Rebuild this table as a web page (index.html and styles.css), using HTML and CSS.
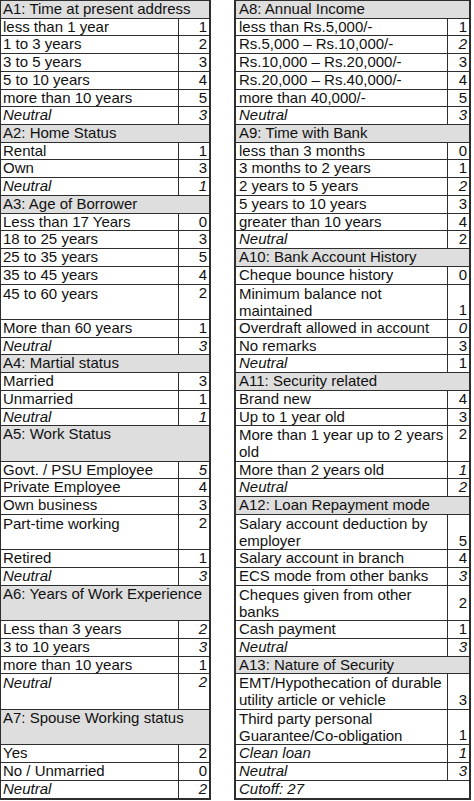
FILE: index.html
```html
<!DOCTYPE html>
<html>
<head>
<meta charset="utf-8">
<link rel="stylesheet" href="styles.css">
</head>
<body>
<div class="page">
  <div class="tbl left">
    <div class="hd">A1: Time at present address</div>
    <div class="row"><span class="lb">less than 1 year</span><span class="v">1</span></div>
    <div class="row"><span class="lb">1 to 3 years</span><span class="v">2</span></div>
    <div class="row"><span class="lb">3 to 5 years</span><span class="v">3</span></div>
    <div class="row"><span class="lb">5 to 10 years</span><span class="v">4</span></div>
    <div class="row"><span class="lb">more than 10 years</span><span class="v">5</span></div>
    <div class="row"><span class="lb it">Neutral</span><span class="v it">3</span></div>

    <div class="hd">A2: Home Status</div>
    <div class="row"><span class="lb">Rental</span><span class="v">1</span></div>
    <div class="row"><span class="lb">Own</span><span class="v">3</span></div>
    <div class="row"><span class="lb it">Neutral</span><span class="v it">1</span></div>

    <div class="hd">A3: Age of Borrower</div>
    <div class="row"><span class="lb">Less than 17 Years</span><span class="v">0</span></div>
    <div class="row"><span class="lb">18 to 25 years</span><span class="v">3</span></div>
    <div class="row"><span class="lb">25 to 35 years</span><span class="v">5</span></div>
    <div class="row"><span class="lb">35 to 45 years</span><span class="v">4</span></div>
    <div class="row dbl"><span class="lb">45 to 60 years</span><span class="v">2</span></div>
    <div class="row"><span class="lb">More than 60 years</span><span class="v">1</span></div>
    <div class="row"><span class="lb it">Neutral</span><span class="v it">3</span></div>

    <div class="hd">A4: Martial status</div>
    <div class="row"><span class="lb">Married</span><span class="v">3</span></div>
    <div class="row"><span class="lb">Unmarried</span><span class="v">1</span></div>
    <div class="row"><span class="lb it">Neutral</span><span class="v it">1</span></div>

    <div class="hd dbl">A5: Work Status</div>
    <div class="row"><span class="lb">Govt. / PSU Employee</span><span class="v it">5</span></div>
    <div class="row"><span class="lb">Private Employee</span><span class="v">4</span></div>
    <div class="row"><span class="lb">Own business</span><span class="v">3</span></div>
    <div class="row dbl"><span class="lb">Part-time working</span><span class="v">2</span></div>
    <div class="row"><span class="lb">Retired</span><span class="v">1</span></div>
    <div class="row"><span class="lb it">Neutral</span><span class="v it">3</span></div>

    <div class="hd dbl">A6: Years of Work Experience</div>
    <div class="row"><span class="lb">Less than 3 years</span><span class="v it">2</span></div>
    <div class="row"><span class="lb">3 to 10 years</span><span class="v it">3</span></div>
    <div class="row"><span class="lb">more than 10 years</span><span class="v">1</span></div>
    <div class="row dbl"><span class="lb it">Neutral</span><span class="v it">2</span></div>

    <div class="hd dbl">A7: Spouse Working status</div>
    <div class="row"><span class="lb">Yes</span><span class="v">2</span></div>
    <div class="row"><span class="lb">No / Unmarried</span><span class="v">0</span></div>
    <div class="row"><span class="lb it">Neutral</span><span class="v it">2</span></div>
  </div>

  <div class="tbl right">
    <div class="hd">A8: Annual Income</div>
    <div class="row"><span class="lb">less than Rs.5,000/-</span><span class="v">1</span></div>
    <div class="row"><span class="lb">Rs.5,000 – Rs.10,000/-</span><span class="v it">2</span></div>
    <div class="row"><span class="lb">Rs.10,000 – Rs.20,000/-</span><span class="v">3</span></div>
    <div class="row"><span class="lb">Rs.20,000 – Rs.40,000/-</span><span class="v">4</span></div>
    <div class="row"><span class="lb">more than 40,000/-</span><span class="v">5</span></div>
    <div class="row"><span class="lb it">Neutral</span><span class="v it">3</span></div>

    <div class="hd">A9: Time with Bank</div>
    <div class="row"><span class="lb">less than 3 months</span><span class="v">0</span></div>
    <div class="row"><span class="lb">3 months to 2 years</span><span class="v">1</span></div>
    <div class="row"><span class="lb">2 years to 5 years</span><span class="v it">2</span></div>
    <div class="row"><span class="lb">5 years to 10 years</span><span class="v">3</span></div>
    <div class="row"><span class="lb">greater than 10 years</span><span class="v">4</span></div>
    <div class="row"><span class="lb it">Neutral</span><span class="v">2</span></div>

    <div class="hd">A10: Bank Account History</div>
    <div class="row"><span class="lb">Cheque bounce history</span><span class="v">0</span></div>
    <div class="row dbl"><span class="lb">Minimum balance not<br>maintained</span><span class="v bot">1</span></div>
    <div class="row"><span class="lb">Overdraft allowed in account</span><span class="v it">0</span></div>
    <div class="row"><span class="lb">No remarks</span><span class="v">3</span></div>
    <div class="row"><span class="lb it">Neutral</span><span class="v">1</span></div>

    <div class="hd">A11: Security related</div>
    <div class="row"><span class="lb">Brand new</span><span class="v">4</span></div>
    <div class="row"><span class="lb">Up to 1 year old</span><span class="v">3</span></div>
    <div class="row dbl"><span class="lb">More than 1 year up to 2 years<br>old</span><span class="v">2</span></div>
    <div class="row"><span class="lb">More than 2 years old</span><span class="v it">1</span></div>
    <div class="row"><span class="lb it">Neutral</span><span class="v it">2</span></div>

    <div class="hd">A12: Loan Repayment mode</div>
    <div class="row dbl"><span class="lb">Salary account deduction by<br>employer</span><span class="v bot">5</span></div>
    <div class="row"><span class="lb">Salary account in branch</span><span class="v">4</span></div>
    <div class="row"><span class="lb">ECS mode from other banks</span><span class="v it">3</span></div>
    <div class="row dbl"><span class="lb">Cheques given from other<br>banks</span><span class="v mid">2</span></div>
    <div class="row"><span class="lb">Cash payment</span><span class="v">1</span></div>
    <div class="row"><span class="lb it">Neutral</span><span class="v it">3</span></div>

    <div class="hd">A13: Nature of Security</div>
    <div class="row dbl"><span class="lb">EMT/Hypothecation of durable<br>utility article or vehicle</span><span class="v bot">3</span></div>
    <div class="row dbl"><span class="lb">Third party personal<br>Guarantee/Co-obligation</span><span class="v bot">1</span></div>
    <div class="row"><span class="lb it">Clean loan</span><span class="v it">1</span></div>
    <div class="row"><span class="lb it">Neutral</span><span class="v it">3</span></div>
    <div class="full it">Cutoff: 27</div>
  </div>
</div>
</body>
</html>
```

FILE: styles.css
```css
html, body {
  margin: 0;
  padding: 0;
  background: #ffffff;
}

body {
  font-family: "Liberation Sans", Arial, sans-serif;
  font-size: 15px;
  color: #111111;
}

.page {
  display: flex;
  align-items: flex-start;
  width: 474px;
  height: 801px;
}

.tbl {
  --u: 17.72px;
  display: flex;
  flex-direction: column;
  box-sizing: border-box;
  border: 2px solid #2e2e2e;
  border-top-width: 1px;
}

.left {
  --vw: 31px;
  width: 211px;
  border-left-width: 1px;
}

.right {
  --vw: 22px;
  width: 237px;
  margin-left: 23px;
}

.hd, .row, .full {
  box-sizing: border-box;
  height: var(--u);
  border-bottom: 1px solid #2e2e2e;
  line-height: 16.7px;
  white-space: nowrap;
}

.tbl > :last-child {
  border-bottom: none;
}

.hd {
  background: #dedede;
  padding-left: 2px;
}

.full {
  padding-left: 2px;
}

.right .hd, .right .full {
  padding-left: 3px;
}

.dbl {
  height: calc(var(--u) * 2);
}

.row {
  display: grid;
  grid-template-columns: 1fr var(--vw);
}

.lb {
  padding-left: 2px;
  overflow: hidden;
}

.right .lb {
  padding-left: 3px;
}

.row.dbl .lb {
  line-height: 17px;
}

.v {
  border-left: 1px solid #2e2e2e;
  text-align: right;
  padding-right: 2px;
}

.v.bot {
  display: flex;
  align-items: flex-end;
  justify-content: flex-end;
}

.v.mid {
  display: flex;
  align-items: center;
  justify-content: flex-end;
}

.it {
  font-style: italic;
}
```
